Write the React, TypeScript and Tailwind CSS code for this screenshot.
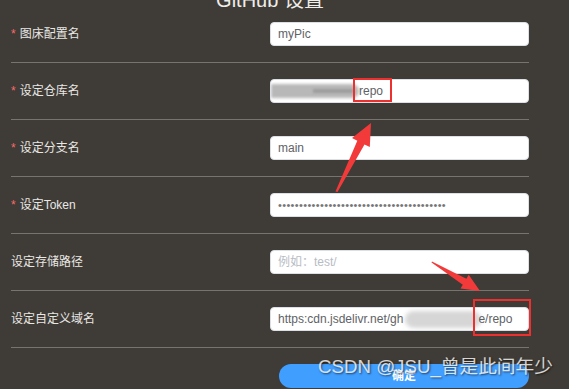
import React from "react";

const font = "font-['Liberation_Sans','Noto_Sans_CJK_SC',sans-serif]";

function Label({ text, required }: { text: string; required?: boolean }) {
  return (
    <label className="flex items-start text-[12px] leading-[16px] text-[#e9e7e4]">
      {required && <span className="mr-[4px] text-[#f56c6c]">*</span>}
      <span>{text}</span>
    </label>
  );
}

const inputBox =
  "relative flex h-[24px] w-[259px] items-center overflow-hidden rounded-[4px] border border-[#dcdfe6] bg-white px-[7px] text-[12px] text-[#606266]";

export default function App() {
  return (
    <div className={`relative h-[389px] w-[569px] overflow-hidden bg-[#3f3b36] ${font}`}>
      <div className="ml-[11px] w-[518px]">
        <h2 className="-mb-[4px] -mt-[10px] text-center text-[20px] leading-[20px] text-[#efedea]">GitHub 设置</h2>

        <div className="flex items-center justify-between border-b border-[#77736e] py-[16px]">
          <Label text="图床配置名" required />
          <div className={inputBox}>myPic</div>
        </div>

        <div className="flex items-center justify-between border-b border-[#77736e] py-[16px]">
          <Label text="设定仓库名" required />
          <div className={inputBox}>
            <div className="absolute left-0 top-[4px] h-[14px] w-[88px] rounded-r-full bg-[#b8b8b8] blur-[1.5px]" />
            <div className="absolute left-[42px] top-[9px] h-[4px] w-[40px] bg-[#9e9e9e] blur-[1px]" />
            <span className="relative ml-[81px]">repo</span>
          </div>
        </div>

        <div className="flex items-center justify-between border-b border-[#77736e] py-[16px]">
          <Label text="设定分支名" required />
          <div className={inputBox}>main</div>
        </div>

        <div className="flex items-center justify-between border-b border-[#77736e] py-[16px]">
          <Label text="设定Token" required />
          <div className={inputBox}>
            <span className="text-[11px] tracking-[0.35px] text-[#777]">{"•".repeat(40)}</span>
          </div>
        </div>

        <div className="flex items-center justify-between border-b border-[#77736e] py-[16px]">
          <Label text="设定存储路径" />
          <div className={`${inputBox} text-[#b8bcc4]`}>例如：test/</div>
        </div>

        <div className="flex items-center justify-between border-b border-[#77736e] py-[16px]">
          <Label text="设定自定义域名" />
          <div className={inputBox}>
            <span>https:cdn.jsdelivr.net/gh</span>
            <div className="absolute left-[134px] top-[3px] h-[17px] w-[76px] rounded-full bg-[#d6d6d6] blur-[2px]" />
            <span className="relative ml-[75px]">e/repo</span>
          </div>
        </div>

        <div className="mt-[16px] flex justify-end">
          <button className="h-[24px] w-[250px] rounded-full bg-[#409eff] text-[12px] font-bold text-white">确定</button>
        </div>
      </div>

      <div className="absolute left-[353px] top-[78px] h-[24px] w-[39px] border-2 border-[#ec2f2f]" />
      <div className="absolute left-[473px] top-[299px] h-[37px] w-[58px] border-2 border-[#ec2f2f]" />

      <svg className="pointer-events-none absolute inset-0" width="569" height="389" viewBox="0 0 569 389">
        <polygon
          points="335.5,191.5 357.3,140.8 352,138 371,123 369.8,147.1 364.5,144.4 337.5,192"
          fill="#f23a3a"
        />
        <polygon
          points="432,261.5 466.4,278.7 468.7,274.8 480,291 460.5,288.6 462.8,284.7 431.5,262.5"
          fill="#f23a3a"
        />
      </svg>

      <div className="absolute left-[318px] top-[355px] text-[18.7px] leading-[24px] text-white/80 [text-shadow:1px_1px_2px_rgba(0,0,0,0.6)]">
        CSDN @JSU_曾是此间年少
      </div>
    </div>
  );
}
